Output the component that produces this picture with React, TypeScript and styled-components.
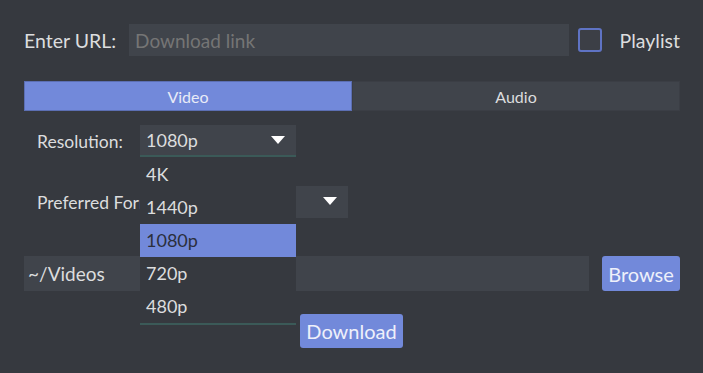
import React, { useState } from 'react'
import styled, { createGlobalStyle } from 'styled-components'

const GlobalStyle = createGlobalStyle`
  html, body {
    margin: 0;
    padding: 0;
    background: #36393f;
  }
  body {
    font-family: Lato, "Noto Sans", sans-serif;
    color: #dcddde;
  }
`

const Page = styled.div`
  width: 703px;
  height: 373px;
  box-sizing: border-box;
  padding: 24px 23px 0 24px;
  background: #36393f;
  display: flex;
  flex-direction: column;
`

const UrlRow = styled.div`
  display: flex;
  align-items: center;
  height: 32px;
`

const Label = styled.span`
  font-size: 19.5px;
  color: #dcddde;
  white-space: nowrap;
`

const UrlInput = styled.input`
  flex: 1;
  height: 32px;
  box-sizing: border-box;
  margin-left: 13px;
  border: none;
  outline: none;
  background: #40444b;
  color: #dcddde;
  font-family: inherit;
  font-size: 19px;
  padding: 0 6px;
  ::placeholder {
    color: #5c6068;
  }
`

const CheckBox = styled.span`
  width: 24px;
  height: 24px;
  box-sizing: border-box;
  margin-left: 9px;
  margin-right: 18px;
  border: 2px solid #5f73c4;
  border-radius: 3px;
  background: #3c3f46;
`

const Tabs = styled.div`
  display: flex;
  margin-top: 25px;
  height: 30px;
`

const Tab = styled.div<{ active?: boolean }>`
  flex: 1;
  display: flex;
  align-items: center;
  justify-content: center;
  font-size: 16px;
  color: ${({ active }) => (active ? '#e8ebf7' : '#dcddde')};
  background: ${({ active }) => (active ? '#7289da' : '#40444b')};
  border: 1px solid ${({ active }) => (active ? '#5c6fb3' : '#3b3e45')};
`

const Form = styled.div`
  display: flex;
  flex-direction: column;
  gap: 29px;
  padding: 14px 0 0 13px;
`

const FieldRow = styled.div`
  display: flex;
  align-items: center;
  position: relative;
`

const FieldLabel = styled.span<{ width: number }>`
  width: ${({ width }) => width}px;
  font-size: 17.5px;
  color: #dcddde;
  white-space: nowrap;
`

const Combo = styled.div<{ width: number; open?: boolean }>`
  width: ${({ width }) => width}px;
  height: 32px;
  box-sizing: border-box;
  display: flex;
  align-items: center;
  justify-content: space-between;
  padding: 0 11px 0 6px;
  background: #40444b;
  border-bottom: 2px solid ${({ open }) => (open ? '#3b5a58' : 'transparent')};
  font-size: 18px;
  color: #dcddde;
`

const Popup = styled.ul`
  position: absolute;
  left: 103px;
  top: 33px;
  width: 156px;
  margin: 0;
  padding: 0;
  list-style: none;
  background: #36393f;
  border-bottom: 2px solid #3b5a58;
  z-index: 2;
`

const Option = styled.li<{ selected?: boolean }>`
  height: 33px;
  line-height: 33px;
  padding-left: 6px;
  font-size: 18px;
  color: ${({ selected }) => (selected ? '#2b2f3c' : '#dcddde')};
  background: ${({ selected }) => (selected ? '#7289da' : 'transparent')};
`

const Arrow = () => (
  <svg width="14" height="8" viewBox="0 0 14 8">
    <path d="M0 0 H14 L7 8 Z" fill="#ffffff" />
  </svg>
)

const PathRow = styled.div`
  display: flex;
  gap: 13px;
  margin-top: 38px;
  height: 35px;
`

const PathField = styled.div`
  flex: 1;
  display: flex;
  align-items: center;
  padding-left: 4px;
  background: #40444b;
  font-size: 19px;
  color: #dcddde;
`

const Button = styled.button<{ width?: number; height?: number }>`
  width: ${({ width }) => (width ? `${width}px` : 'auto')};
  height: ${({ height }) => height ?? 35}px;
  padding: 0 6px;
  border: none;
  border-radius: 3px;
  background: #7289da;
  color: #eef0fa;
  font-family: inherit;
  font-size: 20px;
`

const Footer = styled.div`
  display: flex;
  justify-content: center;
  margin-top: 23px;
  padding-right: 1px;
`

const resolutions = ['4K', '1440p', '1080p', '720p', '480p']

export default function App() {
  const [url, setUrl] = useState('')
  const selected = '1080p'

  return (
    <Page>
      <GlobalStyle />
      <UrlRow>
        <Label>Enter URL:</Label>
        <UrlInput placeholder="Download link" value={url} onChange={e => setUrl(e.target.value)} />
        <CheckBox />
        <Label>Playlist</Label>
      </UrlRow>
      <Tabs>
        <Tab active>Video</Tab>
        <Tab>Audio</Tab>
      </Tabs>
      <Form>
        <FieldRow>
          <FieldLabel width={103}>Resolution:</FieldLabel>
          <Combo width={156} open>
            {selected}
            <Arrow />
          </Combo>
          <Popup>
            {resolutions.map(r => (
              <Option key={r} selected={r === selected}>
                {r}
              </Option>
            ))}
          </Popup>
        </FieldRow>
        <FieldRow>
          <FieldLabel width={145}>Preferred Format:</FieldLabel>
          <Combo width={166}>
            mp4
            <Arrow />
          </Combo>
        </FieldRow>
      </Form>
      <PathRow>
        <PathField>~/Videos</PathField>
        <Button width={78}>Browse</Button>
      </PathRow>
      <Footer>
        <Button height={34}>Download</Button>
      </Footer>
    </Page>
  )
}
